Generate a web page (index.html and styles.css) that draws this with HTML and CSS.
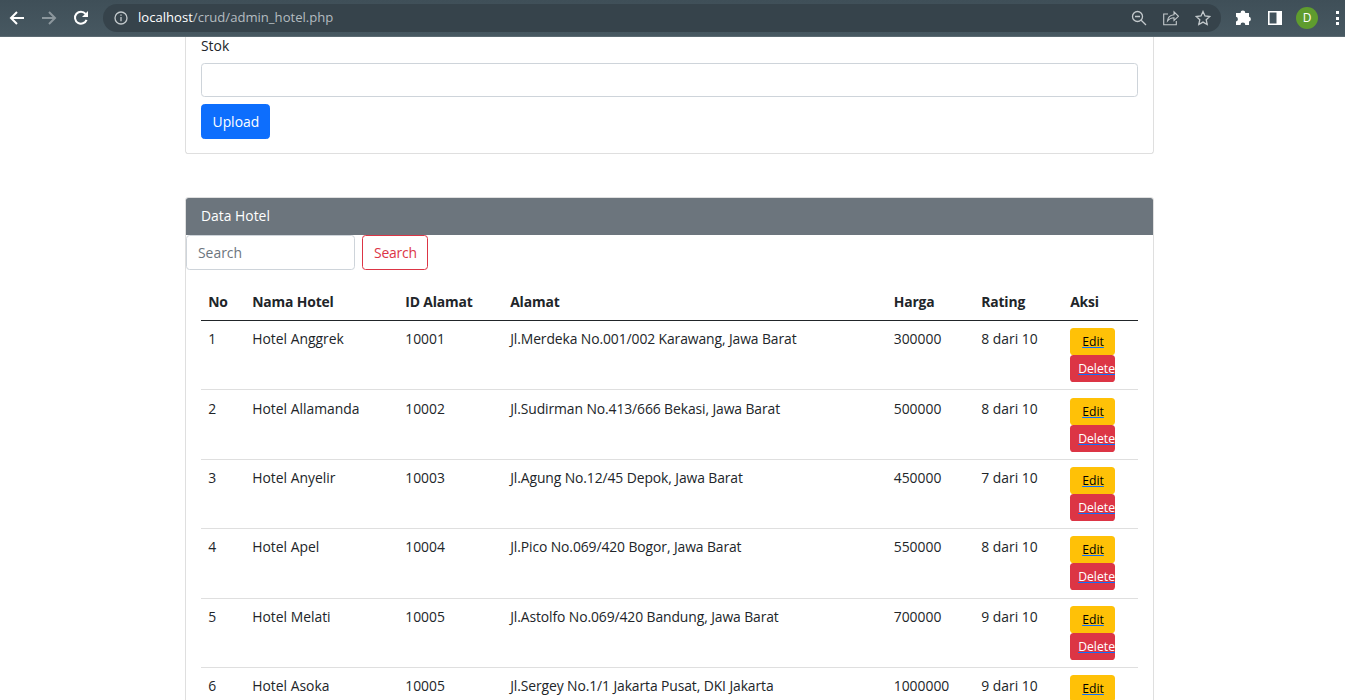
FILE: index.html
```html
<!DOCTYPE html>
<html lang="id">
<head>
<meta charset="utf-8">
<title>Admin Hotel</title>
<link rel="stylesheet" href="styles.css">
</head>
<body>
<header class="toolbar">
  <svg class="nav-icon" viewBox="0 0 16 16"><path class="st-white" d="M15 8H2M8 2 2 8l6 6"/></svg>
  <svg class="nav-icon nav-fwd" viewBox="0 0 16 16"><path class="st-dim" d="M1 8h13M8 2l6 6-6 6"/></svg>
  <svg class="nav-icon nav-reload" viewBox="0 0 16 16"><path class="st-white" d="M13.600 9.800A6 6 0 1 1 12.600 3.800"/><path class="fill-white" d="M15 1v6H9z"/></svg>
  <div class="omnibox">
    <svg class="info" viewBox="0 0 14 14"><circle class="st-grey" cx="7" cy="7" r="6"/><path class="st-grey" d="M7 6v4.200M7 3.400v1.400"/></svg>
    <span class="url"><span class="host">localhost</span>/crud/admin_hotel.php</span>
    <div class="omni-actions">
      <svg class="omni-icon" viewBox="0 0 16 16"><circle class="st-grey" cx="6.500" cy="6.500" r="5"/><path class="st-grey" d="M4 6.500h5M10.200 10.200 15 15"/></svg>
      <svg class="omni-icon" viewBox="0 0 16 16"><path class="st-thin" d="M5 4H.7v10.800h12.600V11"/><path class="st-thin" d="M4.500 11C4.800 7.500 7.500 5 11 4.700V1.800L15.500 6.300 11 10.500V7.700C8.500 7.700 6 9 4.500 11z"/></svg>
      <svg class="omni-icon" viewBox="0 0 16 16"><path class="st-grey" d="M8 1.500l2 4.500 4.800.5-3.600 3.200 1 4.800L8 12.100 3.800 14.500l1-4.800L1.200 6.500 6 6z"/></svg>
    </div>
  </div>
  <div class="tools">
    <svg class="puzzle" viewBox="0 0 16 16"><path class="fill-white" d="M5.500 3a2.400 2.400 0 0 1 4.800 0H14v3.800a2.400 2.400 0 0 1 0 4.700V15H10.300a2.400 2.400 0 0 0-4.800 0H1v-3.500a2.400 2.400 0 0 0 0-4.700V3z"/></svg>
    <svg class="panel" viewBox="0 0 14 14"><path class="fill-white" fill-rule="evenodd" d="M0 0h14v14H0zM1.600 1.600v10.800h6.900V1.600z"/></svg>
    <span class="avatar">D</span>
    <span class="dots"><i></i><i></i><i></i></span>
  </div>
</header>

<main class="page">
  <section class="card card-upload">
    <div class="card-body">
      <label class="form-label" for="stok">Stok</label>
      <input class="form-control" id="stok" type="text">
      <button class="btn btn-primary" type="button">Upload</button>
    </div>
  </section>

  <section class="card card-data">
    <div class="card-header">Data Hotel</div>
    <form class="search-form">
      <input class="form-control search-input" type="text" placeholder="Search">
      <button class="btn btn-outline" type="button">Search</button>
    </form>
    <div class="table-wrap">
      <table class="table">
        <thead>
          <tr>
            <th class="c-no">No</th><th class="c-name">Nama Hotel</th><th class="c-id">ID Alamat</th><th class="c-addr">Alamat</th><th class="c-price">Harga</th><th class="c-rate">Rating</th><th class="c-act">Aksi</th>
          </tr>
        </thead>
        <tbody>
          <tr><td>1</td><td>Hotel Anggrek</td><td>10001</td><td class="addr">Jl.Merdeka No.001/002 Karawang, Jawa Barat</td><td>300000</td><td>8 dari 10</td><td><a class="mini mini-edit" href="#">Edit</a><a class="mini mini-del" href="#">Delete</a></td></tr>
          <tr><td>2</td><td>Hotel Allamanda</td><td>10002</td><td class="addr">Jl.Sudirman No.413/666 Bekasi, Jawa Barat</td><td>500000</td><td>8 dari 10</td><td><a class="mini mini-edit" href="#">Edit</a><a class="mini mini-del" href="#">Delete</a></td></tr>
          <tr><td>3</td><td>Hotel Anyelir</td><td>10003</td><td class="addr">Jl.Agung No.12/45 Depok, Jawa Barat</td><td>450000</td><td>7 dari 10</td><td><a class="mini mini-edit" href="#">Edit</a><a class="mini mini-del" href="#">Delete</a></td></tr>
          <tr><td>4</td><td>Hotel Apel</td><td>10004</td><td class="addr">Jl.Pico No.069/420 Bogor, Jawa Barat</td><td>550000</td><td>8 dari 10</td><td><a class="mini mini-edit" href="#">Edit</a><a class="mini mini-del" href="#">Delete</a></td></tr>
          <tr><td>5</td><td>Hotel Melati</td><td>10005</td><td class="addr">Jl.Astolfo No.069/420 Bandung, Jawa Barat</td><td>700000</td><td>9 dari 10</td><td><a class="mini mini-edit" href="#">Edit</a><a class="mini mini-del" href="#">Delete</a></td></tr>
          <tr><td>6</td><td>Hotel Asoka</td><td>10005</td><td class="addr">Jl.Sergey No.1/1 Jakarta Pusat, DKI Jakarta</td><td>1000000</td><td>9 dari 10</td><td><a class="mini mini-edit" href="#">Edit</a></td></tr>
        </tbody>
      </table>
    </div>
  </section>
</main>
</body>
</html>
```
FILE: styles.css
```css
* { box-sizing: border-box; }
html, body { height: 100%; }
body {
  margin: 0;
  height: 700px;
  overflow: hidden;
  background: #fff;
  color: #212529;
  font-family: "Open Sans", "Noto Sans", sans-serif;
  font-size: 13.900px;
  line-height: 21.600px;
  display: flex;
  flex-direction: column;
}

/* Browser chrome */
.toolbar {
  height: 37px;
  flex: none;
  display: flex;
  align-items: center;
  background: linear-gradient(#3f4f58, #475861);
  border-bottom: 1px solid #5b6a72;
  padding-left: 9px;
}
.nav-icon { width: 16px; height: 16px; flex: none; }
.nav-fwd { margin-left: 16px; }
.nav-reload { margin-left: 16px; }
.st-white, .st-dim, .st-grey, .st-thin { fill: none; stroke-width: 2; }
.st-white { stroke: #fff; }
.st-dim { stroke: #8c979d; }
.st-grey { stroke: #c3c9cc; stroke-width: 1.300; }
.st-thin { stroke: #c3c9cc; stroke-width: 1.100; }
.fill-white { fill: #fff; }
.omnibox {
  margin-left: 14px;
  width: 1118px;
  height: 28px;
  border-radius: 14px;
  background: #36434b;
  display: flex;
  align-items: center;
  padding-left: 11px;
  flex: none;
}
.info { width: 14px; height: 14px; flex: none; }
.url {
  margin-left: 10px;
  font-size: 13.100px;
  color: #b4bcc0;
}
.host { color: #fff; }
.omni-actions {
  margin-left: auto;
  display: flex;
  gap: 16px;
  padding-right: 10px;
}
.omni-icon { width: 16px; height: 16px; }
.tools {
  display: flex;
  align-items: center;
  margin-left: 14px;
}
.puzzle { width: 16px; height: 16px; }
.panel { width: 14px; height: 14px; margin-left: 17px; }
.avatar {
  margin-left: 14px;
  width: 22px;
  height: 22px;
  border-radius: 50%;
  background: #5f9c2e;
  color: #fff;
  font-size: 12px;
  line-height: 22px;
  text-align: center;
}
.dots {
  margin-left: 18px;
  display: flex;
  flex-direction: column;
  gap: 2.500px;
}
.dots i { width: 3px; height: 3px; background: #fff; display: block; }

/* Page */
.page {
  flex: 1;
  min-height: 0;
  overflow: hidden;
  width: 969px;
  margin-left: 185px;
}
.card {
  border: 1px solid #dfdfdf;
  border-radius: 3.600px;
  background: #fff;
}
.card-upload {
  border-top: 0;
  border-top-left-radius: 0;
  border-top-right-radius: 0;
  height: 117px;
}
.card-body { display: flow-root; padding: 0 15px; }
.form-label { display: block; height: 26px; margin: -2px 0 2px; }
.form-control {
  display: block;
  width: 100%;
  height: 34px;
  border: 1px solid #ced4da;
  border-radius: 3.600px;
  padding: 0 11px;
  font: inherit;
  color: #212529;
  background: #fff;
  outline: 0;
}
.form-control::placeholder { color: #6c757d; opacity: 1; }
.btn {
  display: block;
  height: 35px;
  border-radius: 3.600px;
  font: inherit;
  padding: 0 10.500px;
  cursor: pointer;
}
.btn-primary {
  margin-top: 7px;
  width: 69px;
  background: #0d6efd;
  border: 1px solid #0d6efd;
  color: #fff;
}
.card-data { margin-top: 43px; min-height: 600px; border-bottom: 0; }
.card-header {
  height: 37px;
  background: #6c757d;
  color: #fff;
  padding: 7px 15px;
  border-top-left-radius: 2.600px;
  border-top-right-radius: 2.600px;
}
.search-form { display: flex; gap: 7px; align-items: stretch; height: 35px; }
.search-input { width: 169px; height: 35px; }
.btn-outline {
  width: 66px;
  background: #fff;
  border: 1px solid #dc3545;
  color: #dc3545;
  padding: 0 11px;
  letter-spacing: -0.200px;
  white-space: nowrap;
}
.table-wrap { padding: 14px 15px 0; }
.table {
  width: 937px;
  table-layout: fixed;
  border-collapse: collapse;
}
.table th, .table td {
  padding: 7.200px;
  text-align: left;
  vertical-align: top;
}
.table th { font-weight: 700; height: 36px; border-bottom: 1px solid #212529; letter-spacing: -0.150px; }
.table td { border-bottom: 1px solid #dfdfdf; height: 69.400px; }
.table .addr { letter-spacing: -0.100px; }
.c-no { width: 44px; }
.c-name { width: 153px; }
.c-id { width: 105px; }
.c-addr { width: 383.500px; }
.c-price { width: 87.500px; }
.c-rate { width: 89px; }
.c-act { width: 75px; }
.mini {
  display: block;
  width: 45px;
  height: 27px;
  border-radius: 3.600px;
  font-size: 12.200px;
  line-height: 27px;
  white-space: nowrap;
  text-decoration: underline;
  text-decoration-color: #0d6efd;
  text-decoration-thickness: 1px;
}
.mini-edit { background: #ffc107; color: #000; padding-left: 12px; }
.mini-del { background: #dc3545; color: #fff; padding-left: 8px; }
```
